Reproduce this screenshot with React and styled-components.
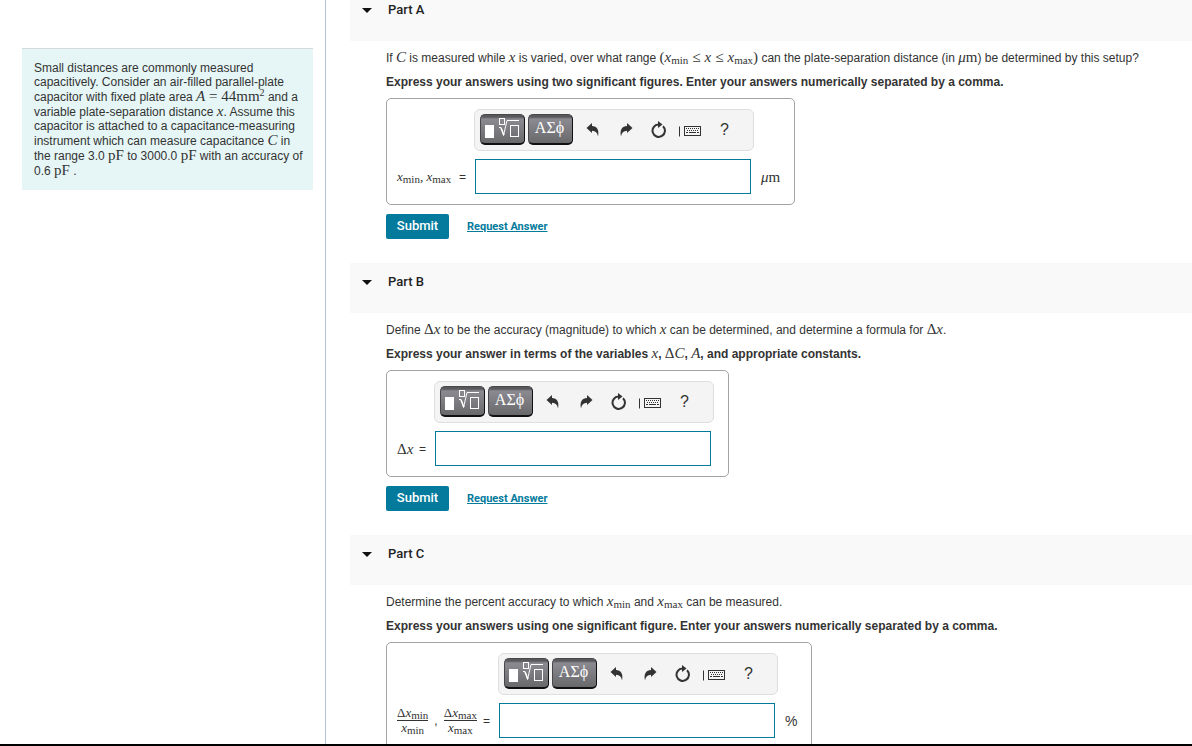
import React from "react";
import styled, { createGlobalStyle } from "styled-components";

const GlobalStyle = createGlobalStyle`
  * { box-sizing: border-box; }
  body {
    margin: 0;
    background: #fff;
    color: #333;
    font: 12px/14px "Liberation Sans", Arial, sans-serif;
  }
`;

const Page = styled.div`
  display: flex;
  height: 100vh;
  overflow: hidden;
  border-bottom: 2px solid #000;
`;

const Sidebar = styled.aside`
  flex: 0 0 326px;
  padding: 48px 12px 0 22px;
  border-right: 1px solid #b4bfd6;
`;

const Problem = styled.p`
  margin: 0;
  padding: 12px 6px 12px 12px;
  border-top: 1px solid #d3dadb;
  background: #e6f6f6;
`;

const Parts = styled.main`
  flex: 1;
  min-width: 0;
  margin-top: -9px;
  padding-left: 24px;
`;

const PartHeader = styled.button`
  display: flex;
  align-items: flex-start;
  gap: 16px;
  width: 100%;
  height: 50px;
  padding: 10px 12px;
  border: 0;
  background: #f9f9f9;
  color: #222;
  font: 500 13px/18px Roboto, sans-serif;
  text-align: left;
`;

const Caret = styled.span`
  margin-top: 7px;
  border: 5px solid transparent;
  border-top-color: #111;
  border-bottom: 0;
`;

const PartBody = styled.div`
  padding: 9px 36px 24px;
`;

const Line = styled.p`
  margin: 0 0 8px;
  line-height: 16px;
  font-weight: ${(p) => (p.$strong ? 700 : 400)};
`;

const MathText = styled.span`
  font-family: "Liberation Serif", "Times New Roman", serif;
  font-size: ${(p) => (p.$small ? 13 : 15)}px;
  font-weight: 400;
  line-height: 14px;
  white-space: nowrap;

  sub, sup {
    font-size: 11px;
    line-height: 0;
  }
  sub { vertical-align: -2px; }
  sup { font-size: 10px; vertical-align: 5px; }
`;

const Relation = styled.span`
  padding: 0 4px;
`;

const AnswerBox = styled.div`
  display: grid;
  grid-template-columns: ${(p) => p.$label}px 280px auto;
  row-gap: 8px;
  width: fit-content;
  padding: 10px 14px 10px 10px;
  border: 1px solid #a3a3a3;
  border-radius: 5px;
`;

const Toolbar = styled.div`
  grid-column: 2;
  display: flex;
  align-items: flex-start;
  height: 42px;
  padding: 4px 5px;
  border: 1px solid #dedede;
  border-radius: 6px;
  background: #f4f4f4;
`;

const PaletteButton = styled.button`
  width: 45px;
  height: 31px;
  margin-right: 3px;
  padding: 0 2px 3px 0;
  border: 1px solid #48484a;
  border-right-color: #111;
  border-bottom: 2px solid #111;
  border-radius: 5px;
  background: linear-gradient(#59595c 0 2px, #8b8a91 4px, #69696b);
  color: #fff;
  font: 16px/20px "Liberation Serif", serif;

  svg { display: block; margin: 0 auto; }
`;

const ToolButton = styled.button`
  display: flex;
  align-items: center;
  justify-content: center;
  width: 33px;
  height: 31px;
  padding: 0;
  border: 0;
  background: none;
  color: #333;
  font: 16px/20px "Liberation Sans", Arial, sans-serif;
`;

const AnswerLabel = styled.label`
  grid-column: 1;
  display: flex;
  align-items: center;
  justify-content: space-between;
  padding-right: 8px;
  white-space: nowrap;
`;

const AnswerInput = styled.input`
  width: 276px;
  height: 35px;
  margin-left: 1px;
  padding: 0 8px;
  border: 1px solid #047a9c;
  background: #fff;
  font: 16px "Liberation Serif", serif;
  outline: 0;
`;

const Unit = styled.span`
  align-self: center;
  padding-left: 7px;
  font-size: 14px;
`;

const Fraction = styled.span`
  display: inline-flex;
  flex-direction: column;
  align-items: center;

  > span + span { border-top: 1px solid #333; }
  > span { width: 100%; text-align: center; }
`;

const Actions = styled.div`
  display: flex;
  align-items: center;
  gap: 18px;
  margin-top: 9px;
`;

const Submit = styled.button`
  width: 63px;
  height: 25px;
  padding: 0 0 2px;
  border: 0;
  border-radius: 2px;
  background: #047a9c;
  color: #fff;
  font: 500 13px/16px Roboto, sans-serif;
`;

const RequestLink = styled.a`
  color: #047a9c;
  font: 700 11px/14px Roboto, sans-serif;
`;

const Min = () => (<><i>x</i><sub>min</sub></>);
const Max = () => (<><i>x</i><sub>max</sub></>);

const TemplateIcon = () => (
  <svg width="35" height="22" viewBox="0 0 35 22" fill="none" stroke="#fff">
    <rect x="1" y="8" width="9" height="13" fill="#fff" stroke="none" />
    <rect x="15.500" y="1.500" width="5" height="6" />
    <path d="M15 10.500h2l2.500 8L23 3.500h12" />
    <path d="M17 11l3 7" strokeWidth="1.500" />
    <rect x="26.500" y="8.500" width="8" height="11" />
  </svg>
);

const Arrow = ({ flip }) => (
  <svg width="14" height="14" viewBox="0 0 14 14" fill="currentColor">
    <path
      transform={flip ? "matrix(-1 0 0 1 14 0)" : undefined}
      d="M.5 5 6 0v3C10.800 3 13.500 7 12 13.500 11.500 9.800 9.500 8 6 7.800V10z"
    />
  </svg>
);

const ResetIcon = () => (
  <svg width="16" height="18" viewBox="0 0 16 18">
    <path d="M12 5.200A6.200 6.200 0 1 1 7.500 3.500" fill="none" stroke="currentColor" strokeWidth="2" />
    <path d="M7 0 11.500 3.500 7 7z" fill="currentColor" />
  </svg>
);

const KeyboardIcon = () => (
  <svg width="26" height="14" viewBox="0 0 26 14" fill="none" stroke="currentColor">
    <path d="M.5 3.500v10" />
    <rect x="5.500" y="3.500" width="16" height="9" />
    <path d="M7 5.500h13M8 7.500h12" strokeDasharray="1 1" />
    <path d="M7 9.500h2M10 9.500h7M18 9.500h2" />
  </svg>
);

function Part({ id, title, question, instruction, label, labelWidth, unit }) {
  return (
    <section>
      <PartHeader type="button" aria-expanded="true">
        <Caret />
        {title}
      </PartHeader>
      <PartBody>
        <Line>{question}</Line>
        <Line $strong>{instruction}</Line>
        <AnswerBox $label={labelWidth}>
          <Toolbar>
            <PaletteButton type="button" aria-label="Templates"><TemplateIcon /></PaletteButton>
            <PaletteButton type="button">ΑΣϕ</PaletteButton>
            <ToolButton type="button" aria-label="Undo"><Arrow /></ToolButton>
            <ToolButton type="button" aria-label="Redo"><Arrow flip /></ToolButton>
            <ToolButton type="button" aria-label="Reset"><ResetIcon /></ToolButton>
            <ToolButton type="button" aria-label="Keyboard shortcuts"><KeyboardIcon /></ToolButton>
            <ToolButton type="button">?</ToolButton>
          </Toolbar>
          <AnswerLabel htmlFor={id}>{label}<span>=</span></AnswerLabel>
          <AnswerInput id={id} type="text" />
          {unit && <Unit>{unit}</Unit>}
        </AnswerBox>
        <Actions>
          <Submit type="button">Submit</Submit>
          <RequestLink href="#">Request Answer</RequestLink>
        </Actions>
      </PartBody>
    </section>
  );
}

export default function App() {
  return (
    <>
      <GlobalStyle />
      <Page>
        <Sidebar>
          <Problem>
            Small distances are commonly measured capacitively. Consider an air-filled
            parallel-plate capacitor with fixed plate area{" "}
            <MathText><i>A</i> = 44mm<sup>2</sup></MathText> and a variable plate-separation
            distance <MathText><i>x</i></MathText>. Assume this capacitor is attached to a
            capacitance-measuring instrument which can measure capacitance{" "}
            <MathText><i>C</i></MathText> in the range 3.0 <MathText>pF</MathText> to 3000.0{" "}
            <MathText>pF</MathText> with an accuracy of 0.6 <MathText>pF</MathText> .
          </Problem>
        </Sidebar>
        <Parts>
          <Part
            id="answer-a"
            title="Part A"
            question={
              <>
                If <MathText><i>C</i></MathText> is measured while <MathText><i>x</i></MathText> is
                varied, over what range{" "}
                <MathText>
                  (<Min /><Relation>≤</Relation><i>x</i><Relation>≤</Relation><Max />)
                </MathText>{" "}
                can the plate-separation
                distance (in <MathText><i>μ</i>m</MathText>) be determined by this setup?
              </>
            }
            instruction="Express your answers using two significant figures. Enter your answers numerically separated by a comma."
            label={<MathText $small><Min />, <Max /></MathText>}
            labelWidth={77}
            unit={<MathText><i>μ</i>m</MathText>}
          />
          <Part
            id="answer-b"
            title="Part B"
            question={
              <>
                Define <MathText>Δ<i>x</i></MathText> to be the accuracy (magnitude) to which{" "}
                <MathText><i>x</i></MathText> can be determined, and determine a formula for{" "}
                <MathText>Δ<i>x</i></MathText>.
              </>
            }
            instruction={
              <>
                Express your answer in terms of the variables <MathText><i>x</i></MathText>,{" "}
                <MathText>Δ<i>C</i></MathText>, <MathText><i>A</i></MathText>, and appropriate
                constants.
              </>
            }
            label={<MathText>Δ<i>x</i></MathText>}
            labelWidth={37}
          />
          <Part
            id="answer-c"
            title="Part C"
            question={
              <>
                Determine the percent accuracy to which <MathText><Min /></MathText> and{" "}
                <MathText><Max /></MathText> can be measured.
              </>
            }
            instruction="Express your answers using one significant figure. Enter your answers numerically separated by a comma."
            label={
              <>
                <Fraction>
                  <MathText $small>Δ<Min /></MathText>
                  <MathText $small><Min /></MathText>
                </Fraction>
                ,
                <Fraction>
                  <MathText $small>Δ<Max /></MathText>
                  <MathText $small><Max /></MathText>
                </Fraction>
              </>
            }
            labelWidth={101}
            unit="%"
          />
        </Parts>
      </Page>
    </>
  );
}
